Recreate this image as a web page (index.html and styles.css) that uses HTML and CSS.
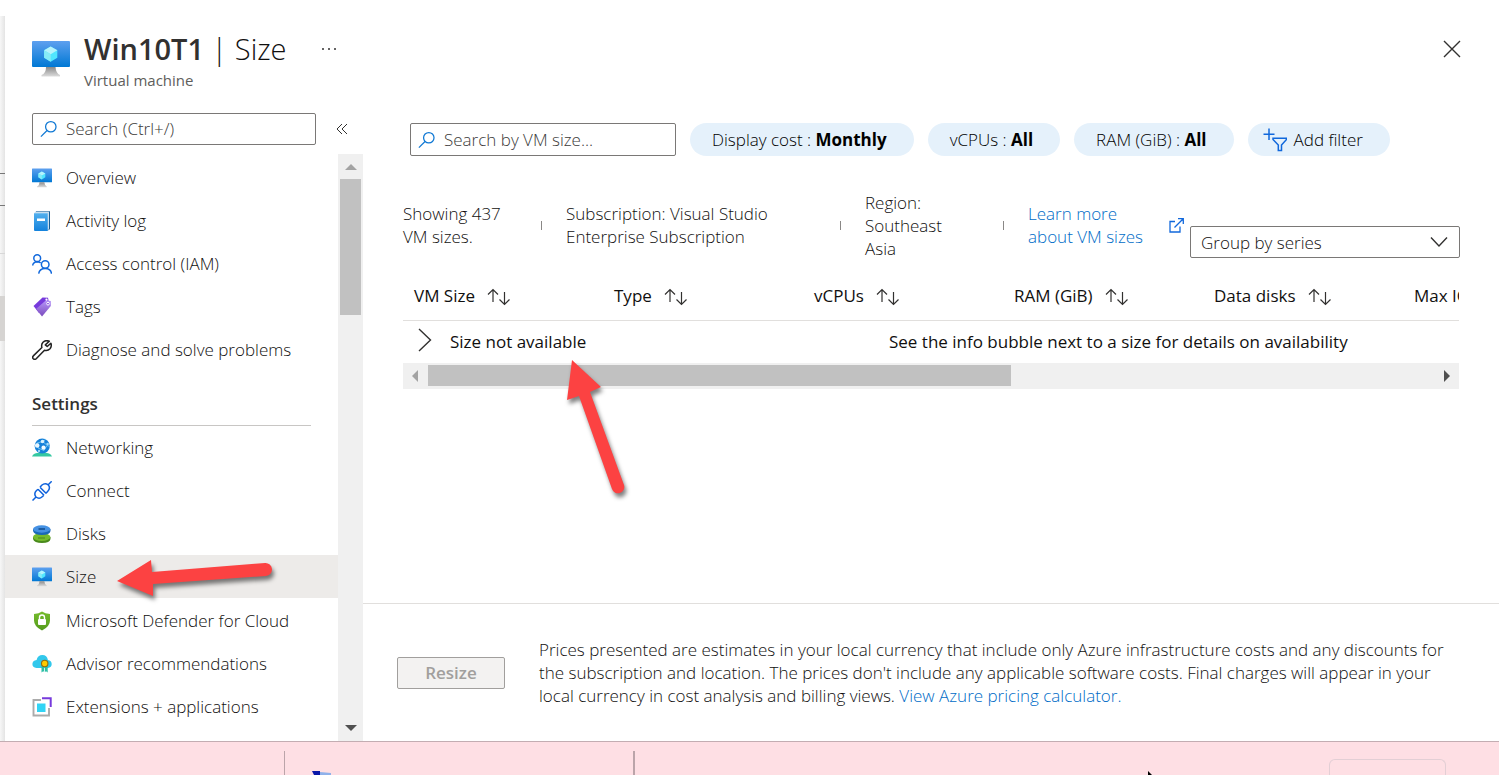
FILE: index.html
```html
<!DOCTYPE html>
<html lang="en">
<head>
<meta charset="utf-8">
<title>Win10T1 | Size</title>
<link rel="stylesheet" href="styles.css">
</head>
<body>
<svg class="defs" aria-hidden="true">
  <defs>
    <linearGradient id="screen" x1="0" y1="0" x2="0" y2="1"><stop offset="0" stop-color="#5ea0ef"/><stop offset="1" stop-color="#0078d4"/></linearGradient>
    <linearGradient id="stand" x1="0" y1="0" x2="0" y2="1"><stop offset="0" stop-color="#8a8a8a"/><stop offset="1" stop-color="#dcdcdc"/></linearGradient>
    <linearGradient id="violet" x1="0" y1="0" x2="0" y2="1"><stop offset="0" stop-color="#b796f9"/><stop offset="1" stop-color="#7a4bbd"/></linearGradient>
    <linearGradient id="book" x1="0" y1="0" x2="0" y2="1"><stop offset="0" stop-color="#52b0ee"/><stop offset="1" stop-color="#1482dc"/></linearGradient>
    <linearGradient id="shield" x1="0" y1="0" x2="0" y2="1"><stop offset="0" stop-color="#76bc2d"/><stop offset="1" stop-color="#549b1c"/></linearGradient>
    <symbol id="vm" viewBox="0 0 38 38">
      <rect y="1" width="38" height="26" rx="1" fill="url(#screen)"/>
      <path d="M14 27h9.500q.5 6.500 4.500 8v1.500H9.500V35q4.500-1.500 4.500-8z" fill="url(#stand)"/>
      <path d="M18.700 6.500 25.300 10.300v7.500l-6.600 4-6.600-4v-7.500z" fill="#50e6ff"/>
      <path d="M18.700 6.500 25.300 10.300l-6.600 4-6.600-4z" fill="#b5f3fc"/>
      <path d="M12.100 10.300l6.600 4v7.500l-6.600-4z" fill="#86ebf7"/>
    </symbol>
    <symbol id="search" viewBox="0 0 20 20"><g fill="none" stroke="#0f78d4" stroke-width="1.400"><circle cx="12" cy="7.500" r="5.800"/><path d="M7.800 11.700 1 18.500"/></g></symbol>
    <symbol id="sort" viewBox="0 0 24 20"><path d="M6 15V2.500M1 7.500l5-5 5 5M17.500 5v12.500M12.500 12.500l5 5 5-5" fill="none" stroke="#323130" stroke-width="1.200"/></symbol>
  </defs>
</svg>
<div class="page">
  <div class="backdrop"><span class="strip-box"></span><span class="strip-line"></span><span class="strip-sel"></span></div>
  <div class="blade">
    <header class="header">
      <svg class="title-icon"><use href="#vm"/></svg>
      <div class="titles">
        <h1>Win10T1 <span>| Size</span></h1>
        <p>Virtual machine</p>
      </div>
      <button class="more" aria-label="More">
        <svg width="16" height="4"><circle cx="2" cy="2" r="1"/><circle cx="8" cy="2" r="1"/><circle cx="14" cy="2" r="1"/></svg>
      </button>
      <button class="close" aria-label="Close"><svg width="18" height="18" viewBox="0 0 18 18"><path d="M1 1l16 16M17 1 1 17"/></svg></button>
    </header>
    <div class="content">
      <aside class="side">
        <div class="side-top">
          <label class="box side-search"><svg><use href="#search"/></svg><input type="text" aria-label="Search" placeholder="Search (Ctrl+/)"></label>
          <button class="collapse" aria-label="Collapse"><svg width="12" height="12" viewBox="0 0 12 12"><path d="M6 1 1 6l5 5M11 1 6 6l5 5"/></svg></button>
        </div>
        <div class="side-body">
          <nav class="menu">
            <a href="#"><svg><use href="#vm"/></svg>Overview</a>
            <a href="#"><svg viewBox="0 0 20 20"><path d="M4 0h13q1 0 1 1v17l-1.500 1.500V2H4z" fill="#155d96"/><path d="M3.500.500H17v17l-1.200 1V2.500H2.500q0-2 1-2z" fill="#c9dff0"/><path d="M2 2.200h13.800V20H3q-1 0-1-1z" fill="url(#book)"/><rect x="5" y="7.500" width="8" height="2.500" fill="#fff"/></svg>Activity log</a>
            <a href="#"><svg viewBox="0 0 20 20" fill="none" stroke="#1168dc" stroke-width="1.500"><circle cx="5.200" cy="4.200" r="3.400"/><path d="M.700 11.500Q1 8 5.200 7.700 7.500 7.700 8.700 9"/><circle cx="13.200" cy="10.500" r="3.800"/><path d="M6.700 19.700q.7-5.300 6.500-5.300t6.300 5.300"/></svg>Access control (IAM)</a>
            <a href="#"><svg viewBox="0 0 20 20"><path d="M1.500 9 10.500.600l5.500.2L17 6 7 16z" fill="#773adc"/><path d="M4 12 14 3.200 18.800 4v5L10 19.500z" fill="url(#violet)"/><circle cx="14.500" cy="2.600" r="1.100" fill="#fff"/><circle cx="16" cy="6.700" r="1.300" fill="#773adc" stroke="#fff"/></svg>Tags</a>
            <a href="#"><svg viewBox="0 0 20 20"><path d="M17.300 1.200Q13.800-.3 11 2.300 9 4.500 9.900 7.500L1.300 15.900q-1.300 1.500 0 2.900 1.400 1.200 2.900-.1L12.500 10.200q3.300.9 5.500-1.400Q20 6.300 18.900 3.200L15.200 6.500 13.300 4.900z" fill="none" stroke="#222" stroke-width="1.500" stroke-linejoin="round"/></svg>Diagnose and solve problems</a>
            <h2>Settings</h2>
            <a href="#"><svg viewBox="0 0 20 20"><path d="M0 18.500q1-4 10-4t10 4z" fill="#35c8a1"/><circle cx="10.200" cy="8" r="7.600" fill="#1680d9"/><path d="M5 5l6-1.500 4 4-3 5-6-2.500zM11 3.500 14 1M15 7.500l3 1" fill="none" stroke="#74c8f5" stroke-width=".9"/><circle cx="10.500" cy="3.500" r="1.800" fill="#d9f1fd"/><circle cx="5.200" cy="7.500" r="2.300" fill="#e8f6fe"/><circle cx="11.500" cy="9.700" r="2.100" fill="#f3fbff"/><circle cx="15.600" cy="6" r="1.300" fill="#a5dcf9"/><circle cx="7" cy="13" r="1.200" fill="#9bd7f7"/></svg>Networking</a>
            <a href="#"><svg viewBox="0 0 20 20" fill="none" stroke="#0f62dc" stroke-width="1.500"><path d="M.500 19.500 4 16M16.200 3.800 19.700.300M8 6.200l6 6M6 8.200l6 6M6 8.200l-1.700 1.600q-2.800 3-.3 6.200 3.200 2.600 6.200-.2L12 14.200M8 6.200l1.700-1.900q3.200-3 6.500-.5 2.700 3.200-.4 6.500L14 12.200"/></svg>Connect</a>
            <a href="#"><svg viewBox="0 0 20 20"><path d="M1 13v2q1 4 9 4t8.500-4v-2z" fill="#498a1c"/><ellipse cx="9.700" cy="13" rx="8.700" ry="4" fill="#76bc2d"/><path d="M6 14h7" stroke="#498a1c"/><path d="M1 5v2q1 4 9 4t8.500-4V5z" fill="#1b69b8"/><ellipse cx="9.700" cy="5" rx="8.700" ry="3.700" fill="#4591e3"/><path d="M6.500 5h6.500" stroke="#124b8b" stroke-width="1.500"/></svg>Disks</a>
            <a href="#" class="selected" aria-current="page"><svg><use href="#vm"/></svg>Size</a>
            <a href="#"><svg viewBox="0 0 20 20"><path d="M10 .500q3 2.200 8 2.400v6.500q0 6-8 10-8-4-8-10V2.900q5-.2 8-2.400z" fill="url(#shield)"/><rect x="6" y="8" width="8" height="6" rx="1" fill="#fff"/><path d="M7.500 8V6.500Q7.500 4 10 4t2.500 2.500V8" fill="none" stroke="#fff" stroke-width="1.400"/></svg>Microsoft Defender for Cloud</a>
            <a href="#"><svg viewBox="0 0 20 20"><path d="M4.500 14Q.300 13.500.400 10T4.600 6Q5.800 1 10.400 1t5.500 5q3.700.5 3.800 4t-3.900 4z" fill="#32c8ec"/><path d="M9.500 11v7.500l1.700-1.200 1 .7v-7zM13 11v7l1-.7 1.700 1.200V11z" fill="#2dbfa6"/><circle cx="12.700" cy="9.500" r="3.200" fill="#ffca00" stroke="#946a13" stroke-width="1.100"/></svg>Advisor recommendations</a>
            <a href="#"><svg viewBox="0 0 20 20"><path d="M9 3H1.500v15.500H17V11" fill="none" stroke="#ababab" stroke-width="1.900"/><rect x="5" y="6.500" width="8.500" height="8.500" fill="#32d4f5"/><path d="M10 1.300h8.700V10" fill="none" stroke="#773adc" stroke-width="2"/></svg>Extensions + applications</a>
          </nav>
          <div class="vscroll"><i class="tri up"></i><span class="vthumb"></span><i class="tri down"></i></div>
        </div>
      </aside>
      <main class="main">
        <div class="filters">
          <label class="box size-search"><svg><use href="#search"/></svg><input type="text" aria-label="Search by VM size" placeholder="Search by VM size..."></label>
          <button class="pill">Display cost : <b>Monthly</b></button>
          <button class="pill">vCPUs : <b>All</b></button>
          <button class="pill">RAM (GiB) : <b>All</b></button>
          <button class="pill add"><svg width="24" height="24" viewBox="0 0 24 24"><path d="M6 .500v11.500M.500 6.200h11M10 10.200h13.500v1.300L18.500 17v5.500h-3.200V17L10 11.500z"/></svg>Add filter</button>
        </div>
        <div class="info">
          <p class="count">Showing 437 VM sizes.</p><i class="sep"></i>
          <p class="subscription">Subscription: Visual Studio Enterprise Subscription</p><i class="sep"></i>
          <p class="region">Region: Southeast Asia</p><i class="sep"></i>
          <a class="learn" href="#"><span>Learn more about VM sizes</span><svg width="15" height="15" viewBox="0 0 15 15"><path d="M6 3.500H1V14h10V8.500M5.500 9.500l8.700-8.700M9 .700h5.300V6"/></svg></a>
          <div class="group"><select aria-label="Grouping"><option>Group by series</option></select><svg width="18" height="12" viewBox="0 0 18 12"><path d="M1 1.500l8 8.500 8-8.500"/></svg></div>
        </div>
        <div class="grid">
          <table>
            <thead><tr>
              <th scope="col">VM Size<svg><use href="#sort"/></svg></th>
              <th scope="col">Type<svg><use href="#sort"/></svg></th>
              <th scope="col">vCPUs<svg><use href="#sort"/></svg></th>
              <th scope="col">RAM (GiB)<svg><use href="#sort"/></svg></th>
              <th scope="col">Data disks<svg><use href="#sort"/></svg></th>
              <th scope="col">Max IOPS<svg><use href="#sort"/></svg></th>
            </tr></thead>
            <tbody><tr>
              <td colspan="6"><div class="row"><button class="expand" aria-label="Expand"><svg width="14" height="24" viewBox="0 0 14 24"><path d="M1 1l11.500 11L1 23"/></svg></button><span class="row-name">Size not available</span><span>See the info bubble next to a size for details on availability</span></div></td>
            </tr></tbody>
          </table>
        </div>
        <div class="hscroll"><i class="tri left"></i><span class="htrack"><span class="hthumb"></span></span><i class="tri right"></i></div>
        <footer class="footer">
          <button class="resize" disabled>Resize</button>
          <p>Prices presented are estimates in your local currency that include only Azure infrastructure costs and any discounts for the subscription and location. The prices don't include any applicable software costs. Final charges will appear in your local currency in cost analysis and billing views. <a href="#">View Azure pricing calculator.</a></p>
        </footer>
      </main>
    </div>
  </div>
  <svg class="note note-row" width="80" height="150" viewBox="0 0 80 150"><path d="M12 0 41 27 30 32 64 125A6 6 0 0 1 52 129L19 36 7 40z"/></svg>
  <svg class="note note-menu" width="170" height="50" viewBox="0 0 170 50"><path d="M7 26 41 5 42 17 155 8A6 6 0 0 1 156 21L43 29V41z"/></svg>
</div>
<div class="bottom">
  <span class="tick thin"></span>
  <svg class="flag" width="20" height="4"><path d="M0 0h8v4H2z" fill="#0a16a8"/><path d="M8 1l11 1v2H8z" fill="#8fb1ea"/></svg>
  <span class="tick thick"></span>
  <svg class="pointer" width="4" height="4"><path d="M0 0l4 4H0z"/></svg>
  <span class="ghost"></span>
</div>
</body>
</html>
```
FILE: styles.css
```css
* { box-sizing: border-box; }
body {
  margin: 0;
  height: 100vh;
  display: flex;
  flex-direction: column;
  overflow: hidden;
  background: #fff;
  color: #11100f;
  font: 300 17px/23px "Open Sans", "Noto Sans", sans-serif;
}
button, input, select { font: inherit; color: inherit; }
button { border: 0; background: none; padding: 0; }
h1, h2, p { margin: 0; font-weight: inherit; }
a { color: #006cc7; text-decoration: none; }
svg { display: block; flex: none; }
.defs { position: absolute; width: 0; height: 0; }

.page { position: relative; flex: 1; min-height: 0; display: flex; }
.backdrop {
  width: 5px;
  flex: none;
  margin-top: 16px;
  background: linear-gradient(90deg, #f7f7f7, #e4e4e4);
  display: flex;
  flex-direction: column;
}
.strip-box { height: 33px; margin-top: 157px; border: solid #777; border-width: 1px 0; }
.strip-line { height: 1px; margin-top: 47px; background: #d8d8d8; }
.strip-sel { height: 45px; margin-top: 42px; background: #d6d4d2; }
.blade { flex: 1; min-width: 0; display: flex; flex-direction: column; }

.header { display: flex; align-items: flex-start; padding: 29px 38px 0 27px; height: 113px; }
.title-icon { width: 38px; height: 38px; margin: 11px 14px 0 0; }
.titles { width: 202px; white-space: nowrap; }
.titles h1 { font-size: 29px; line-height: 40px; font-weight: 600; color: #323130; }
.titles h1 span { font-weight: 300; color: #11100f; }
.titles p { font-size: 15px; line-height: 23px; font-weight: 400; color: #605e5c; }
.more { margin: 18px 0 0 35px; fill: #323130; }
.close { margin: 11px 0 0 auto; }
.close svg, .collapse svg, .group svg, .expand svg { fill: none; stroke: #323130; stroke-width: 1.4; }

.content { flex: 1; min-height: 0; display: flex; }
.side { width: 358px; flex: none; display: flex; flex-direction: column; }
.side-top { display: flex; align-items: center; padding-left: 27px; height: 32px; margin-bottom: 9px; }
.box {
  display: flex;
  align-items: center;
  gap: 8px;
  padding: 0 7px;
  border: 1px solid #7a7876;
  border-radius: 2px;
}
.box svg { width: 18px; height: 18px; }
.box input { flex: 1; min-width: 0; border: 0; padding: 0 0 1px; outline: 0; background: none; }
.box input::placeholder { color: #3b3a39; opacity: 1; }
.side-search { width: 284px; height: 32px; }
.collapse { margin-left: 20px; }
.collapse svg { stroke-width: 1; }
.side-body { flex: 1; min-height: 0; display: flex; }
.menu { flex: 1; overflow: hidden; padding-top: 2px; }
.menu a { display: flex; align-items: center; gap: 14px; height: 43px; padding-left: 27px; color: #11100f; }
.menu svg { width: 20px; height: 20px; }
.menu a.selected { margin-bottom: 1px; background: #edebe9; }
.menu h2 {
  margin: 21px 27px 0;
  padding-bottom: 10px;
  border-bottom: 1px solid #c8c6c4;
  font-size: 17px;
  line-height: 23px;
  font-weight: 600;
  color: #323130;
}
.vscroll { width: 25px; background: #f0f0f0; display: flex; flex-direction: column; align-items: center; padding: 10px 0; }
.vthumb { width: 21px; height: 24%; margin: 9px 0 auto; background: #c1c1c1; }
.tri { width: 0; height: 0; flex: none; border: 6px solid transparent; }
.up { border-top: 0; border-bottom-color: #a3a3a3; }
.down { border-bottom: 0; border-top-color: #505050; }
.left { border-left: 0; border-right-color: #a3a3a3; }
.right { border-right: 0; border-left-color: #505050; }

.main { flex: 1; min-width: 0; display: flex; flex-direction: column; padding-top: 10px; }
.filters { display: flex; gap: 14px; height: 33px; padding-left: 47px; }
.size-search { width: 266px; }
.pill { padding: 0 27px 0 22px; border-radius: 17px; background: #e5f1fb; color: #000; white-space: nowrap; }
.pill b { font-weight: 700; }
.add { display: flex; align-items: center; gap: 7px; padding: 0 27px 0 15px; }
.add svg { fill: none; stroke: #1168dc; stroke-width: 1.5; }

.info { display: flex; align-items: center; padding: 0 39px 0 40px; margin-top: 34px; height: 70px; }
.sep { width: 1px; height: 9px; margin-right: 24px; background: #8a8886; }
.count { width: 138px; padding-right: 24px; }
.subscription { width: 274px; padding-right: 50px; }
.region { width: 138px; padding-right: 50px; }
.learn { display: flex; align-items: center; width: 156px; }
.learn span { width: 142px; padding-right: 10px; }
.learn svg { fill: none; stroke: #1168dc; stroke-width: 1.3; }
.group { position: relative; flex: 1; margin: 34px 0 0 6px; }
.group select {
  display: block;
  width: 100%;
  height: 32px;
  padding: 0 10px;
  border: 1px solid #7a7876;
  border-radius: 2px;
  background: #fff;
  appearance: none;
}
.group svg { position: absolute; right: 12px; top: 10px; }

.grid { margin: 11px 40px 0; overflow: hidden; }
table { width: 1200px; table-layout: fixed; border-collapse: collapse; }
th { height: 49px; padding: 0 0 0 11px; border-bottom: 1px solid #e1dfdd; text-align: left; font-weight: 500; white-space: nowrap; }
th svg { display: inline-block; width: 24px; height: 20px; margin-left: 12px; vertical-align: middle; }
td { padding: 0; }
.row { display: flex; align-items: center; height: 42px; padding-left: 15px; font-weight: 500; }
.expand { margin: 0 18px 4px 0; }
.row-name { width: 439px; }
.hscroll { display: flex; align-items: center; justify-content: space-between; height: 26px; margin: 0 40px; padding: 0 9px; background: #f0f0f0; }
.htrack { flex: 1; margin: 0 10px; }
.hthumb { display: block; width: 58%; height: 21px; background: #c1c1c1; }

.footer {
  display: flex;
  align-items: center;
  gap: 34px;
  height: 138px;
  margin-top: auto;
  padding: 0 40px 0 34px;
  border-top: 1px solid #e1dfdd;
}
.resize { width: 108px; height: 32px; flex: none; border: 1px solid #a19f9d; border-radius: 2px; background: #f3f2f1; color: #a19f9d; font-weight: 600; }

.note { position: absolute; fill: #fc4242; filter: drop-shadow(2px 4px 2px rgba(0, 0, 0, .5)); }
.note-row { left: 560px; top: 360px; }
.note-menu { left: 110px; top: 555px; }

.bottom { display: flex; align-items: flex-end; height: 34px; flex: none; border-top: 1px solid #c3adb2; background: #fedfe4; }
.tick { height: 24px; background: #bba4a9; }
.thin { width: 1px; margin-left: 284px; }
.thick { width: 2px; margin-left: 301px; }
.flag { margin-left: 27px; }
.pointer { margin-left: 513px; }
.ghost { width: 117px; height: 16px; margin: 0 53px 0 auto; border: 1px solid #e3cfd5; border-bottom: 0; border-radius: 6px 6px 0 0; }
```
